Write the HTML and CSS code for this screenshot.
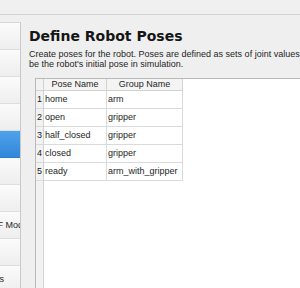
FILE: index.html
```html
<!DOCTYPE html>
<html>
<head>
<meta charset="utf-8">
<link rel="stylesheet" href="styles.css">
</head>
<body>
<div class="window">
  <div class="topbar"></div>
  <div class="body">
    <nav class="sidebar">
      <div class="nav-item"><span class="nav-label">Start</span></div>
      <div class="nav-item"><span class="nav-label">Self-Collisions</span></div>
      <div class="nav-item"><span class="nav-label">Virtual Joints</span></div>
      <div class="nav-item"><span class="nav-label">Planning Groups</span></div>
      <div class="nav-item selected"><span class="nav-label">Robot Poses</span></div>
      <div class="nav-item"><span class="nav-label">End Effectors</span></div>
      <div class="nav-item"><span class="nav-label">Passive Joints</span></div>
      <div class="nav-item nav-urdf"><span class="nav-label">ros2_control URDF Modifications</span></div>
      <div class="nav-item"><span class="nav-label">ROS 2 Controllers</span></div>
      <div class="nav-item nav-moveit"><span class="nav-label">MoveIt Controllers</span></div>
    </nav>
    <main class="main">
      <h1 class="title">Define Robot Poses</h1>
      <p class="desc">Create poses for the robot. Poses are defined as sets of joint values for particular planning groups. This is useful for things like home position. The first listed pose will<br>be the robot's initial pose in simulation.</p>
      <div class="table-view">
        <div class="vheader">
          <div class="corner"></div>
          <div class="rn">1</div>
          <div class="rn">2</div>
          <div class="rn">3</div>
          <div class="rn">4</div>
          <div class="rn">5</div>
        </div>
        <div class="grid">
          <div class="hcell">Pose Name</div>
          <div class="hcell">Group Name</div>
          <div class="cell">home</div>
          <div class="cell">arm</div>
          <div class="cell">open</div>
          <div class="cell">gripper</div>
          <div class="cell">half_closed</div>
          <div class="cell">gripper</div>
          <div class="cell">closed</div>
          <div class="cell">gripper</div>
          <div class="cell">ready</div>
          <div class="cell">arm_with_gripper</div>
        </div>
      </div>
    </main>
  </div>
</div>
</body>
</html>
```

FILE: styles.css
```css
* { box-sizing: border-box; }
html, body { margin: 0; padding: 0; }
body {
  width: 300px;
  height: 288px;
  overflow: hidden;
  background: #efefef;
  font-family: "Liberation Sans", Arial, sans-serif;
  font-size: 9px;
  color: #1e1e1e;
}
.window {
  display: flex;
  flex-direction: column;
  height: 288px;
}
.topbar {
  height: 15px;
  flex: none;
  background: #f0f0f0;
  border-bottom: 1px solid #d3d3d3;
}
.body {
  flex: 1;
  display: flex;
  min-height: 0;
}
.sidebar {
  flex: none;
  width: 21px;
  margin-top: 7px;
  background: #ffffff;
  border-top: 1px solid #d6d6d6;
  border-right: 1px solid #c9c9c9;
  overflow: hidden;
}
.nav-item {
  height: 27px;
  display: flex;
  align-items: center;
  justify-content: flex-start;
  white-space: nowrap;
  overflow: hidden;
  background: linear-gradient(#fbfbfb, #eeeeee);
  border-bottom: 1px solid #dedede;
  color: #262626;
}
.nav-item.selected {
  background: linear-gradient(#4fa1ea, #3187d9);
  border-bottom-color: #2c7dcc;
  color: #ffffff;
}
.nav-label {
  flex: none;
  margin-left: -160px;
}
.nav-urdf .nav-label { margin-left: -74px; }
.nav-moveit .nav-label { margin-left: -69px; }

.main {
  flex: 1;
  min-width: 0;
  display: flex;
  flex-direction: column;
  padding-left: 8px;
  padding-top: 13px;
  overflow: hidden;
}
.title {
  margin: 0;
  font-family: "DejaVu Sans", sans-serif;
  font-weight: bold;
  font-size: 14px;
  line-height: 17px;
  color: #151515;
  white-space: nowrap;
}
.desc {
  margin: 4px 0 0 0;
  line-height: 10px;
  white-space: nowrap;
  color: #1e1e1e;
}
.table-view {
  flex: 1;
  margin-top: 9px;
  margin-left: 6px;
  display: flex;
  background: #ffffff;
  border-left: 1px solid #b9b9b9;
  border-top: 1px solid #b9b9b9;
  min-height: 0;
}
.vheader {
  flex: none;
  width: 8px;
  background: #f2f2f2;
  border-right: 1px solid #d2d2d2;
}
.corner {
  height: 12px;
  border-bottom: 1px solid #d2d2d2;
}
.rn {
  height: 18px;
  line-height: 17px;
  text-align: center;
  border-bottom: 1px solid #d9d9d9;
  color: #222222;
}
.grid {
  display: grid;
  grid-template-columns: 63px 76px;
  grid-auto-rows: 18px;
  grid-template-rows: 12px;
  align-content: start;
}
.hcell {
  background: #f4f4f4;
  border-right: 1px solid #d2d2d2;
  border-bottom: 1px solid #d2d2d2;
  text-align: center;
  line-height: 11px;
  color: #1e1e1e;
  white-space: nowrap;
  overflow: hidden;
}
.cell {
  border-right: 1px solid #dadada;
  border-bottom: 1px solid #dadada;
  padding-left: 1px;
  line-height: 17px;
  white-space: nowrap;
  overflow: hidden;
  color: #1e1e1e;
}
```
